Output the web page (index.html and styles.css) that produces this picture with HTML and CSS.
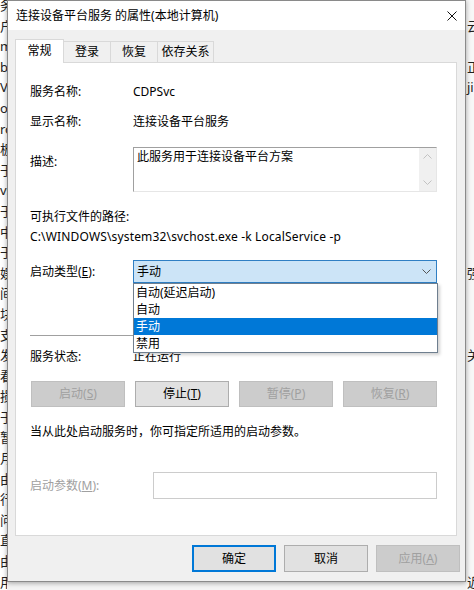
FILE: index.html
```html
<!DOCTYPE html>
<html lang="zh-CN">
<head>
<meta charset="utf-8">
<title>连接设备平台服务 的属性(本地计算机)</title>
<link rel="stylesheet" href="styles.css">
</head>
<body>
<div class="screen">
  <div class="bg-left">
    <div class="strip-text">务<br>户<br>m<br>b<br>Vi<br>ox<br>ro<br>板<br>于<br>vs<br>于<br>中<br>于<br>娱<br>间<br>块<br>支<br>发<br>看<br>损<br>于<br>暂<br>月<br>由<br>行<br>问<br>直<br>由<br>用</div>
  </div>

  <div class="dialog">
    <div class="titlebar">
      <span class="title">连接设备平台服务 的属性(本地计算机)</span>
      <svg class="close" width="10" height="10" viewBox="0 0 10 10" aria-label="关闭">
        <path d="M0.5 0.5 L9.5 9.5 M9.5 0.5 L0.5 9.5" stroke="#111" stroke-width="1" fill="none"/>
      </svg>
    </div>

    <div class="body">
      <div class="tabs">
        <div class="tab active">常规</div>
        <div class="tab w47">登录</div>
        <div class="tab w47">恢复</div>
        <div class="tab w56">依存关系</div>
        <div class="tab-fill"></div>
      </div>

      <div class="panel">
        <div class="row">
          <span class="label">服务名称:</span>
          <span class="value">CDPSvc</span>
        </div>
        <div class="row row-display">
          <span class="label">显示名称:</span>
          <span class="value">连接设备平台服务</span>
        </div>
        <div class="row row-desc">
          <span class="label label-desc">描述:</span>
          <div class="textbox">
            <div class="textbox-text">此服务用于连接设备平台方案</div>
            <div class="scrollbar">
              <svg width="17" height="17" viewBox="0 0 17 17"><path d="M4.5 10.5 L8.5 6.5 L12.5 10.5" stroke="#c2c2c2" stroke-width="1" fill="none"/></svg>
              <svg width="17" height="17" viewBox="0 0 17 17"><path d="M4.5 6.5 L8.5 10.5 L12.5 6.5" stroke="#c2c2c2" stroke-width="1" fill="none"/></svg>
            </div>
          </div>
        </div>
        <div class="row row-pathlabel">可执行文件的路径:</div>
        <div class="row row-path">C:\WINDOWS\system32\svchost.exe -k LocalService -p</div>
        <div class="row row-startup">
          <span class="label">启动类型(<u>E</u>):</span>
          <div class="combo-wrap">
            <div class="combo">
              <span>手动</span>
              <svg width="9" height="6" viewBox="0 0 9 6"><path d="M0.5 0.5 L4.5 4.5 L8.5 0.5" stroke="#555" stroke-width="1" fill="none"/></svg>
            </div>
            <div class="dropdown">
              <div class="opt">自动(延迟启动)</div>
              <div class="opt">自动</div>
              <div class="opt sel">手动</div>
              <div class="opt">禁用</div>
            </div>
          </div>
        </div>
        <div class="sep"></div>
        <div class="row row-status">
          <span class="label">服务状态:</span>
          <span class="value">正在运行</span>
        </div>
        <div class="btn-row">
          <div class="btn disabled">启动(<u>S</u>)</div>
          <div class="btn">停止(<u>T</u>)</div>
          <div class="btn disabled">暂停(<u>P</u>)</div>
          <div class="btn disabled">恢复(<u>R</u>)</div>
        </div>
        <div class="row row-hint">当从此处启动服务时，你可指定所适用的启动参数。</div>
        <div class="row row-params">
          <span class="label label-params">启动参数(<u>M</u>):</span>
          <div class="input"></div>
        </div>
      </div>

      <div class="footer">
        <div class="btn fbtn default">确定</div>
        <div class="btn fbtn">取消</div>
        <div class="btn fbtn disabled">应用(<u>A</u>)</div>
      </div>
    </div>
  </div>

  <div class="bg-right">
    <div class="strip-text right-text"><br>云<br><br>正<br>ji<br><br><br><br><br><br><br><br><br>强<br><br><br><br>关<br><br><br><br><br><br><br><br><br><br><br>近</div>
  </div>
  <div class="bg-bottom"></div>
</div>
</body>
</html>
```

FILE: styles.css
```css
* {
  box-sizing: border-box;
}

html,
body {
  margin: 0;
  padding: 0;
}

body {
  width: 474px;
  height: 590px;
  overflow: hidden;
  background: #ffffff;
  font-family: "Noto Sans", "Noto Sans CJK SC", sans-serif;
  font-size: 12px;
  color: #000000;
}

u {
  text-decoration: underline;
  text-underline-offset: 1px;
}

.screen {
  display: grid;
  grid-template-columns: 7px 459px 8px;
  grid-template-rows: 582px 8px;
  width: 474px;
  height: 590px;
}

/* background window fragments */
.bg-left {
  grid-column: 1;
  grid-row: 1 / 3;
  overflow: hidden;
  background: #ffffff;
}

.strip-text {
  margin-top: -5px;
  font-size: 13px;
  line-height: 20.6px;
  color: #222222;
  white-space: nowrap;
}

.bg-right {
  grid-column: 3;
  grid-row: 1 / 3;
  overflow: hidden;
  background: #f7f7f7;
}

.right-text {
  margin-left: 1px;
}

.bg-bottom {
  grid-column: 2;
  grid-row: 2;
  background: #f4f4f4;
}

/* dialog */
.dialog {
  grid-column: 2;
  grid-row: 1;
  border: 1px solid #8a8a8a;
  background: #f0f0f0;
  display: flex;
  flex-direction: column;
  box-shadow: 0 1px 5px rgba(0, 0, 0, 0.35);
  position: relative;
  z-index: 1;
}

.titlebar {
  height: 29px;
  flex: none;
  background: #ffffff;
  display: flex;
  align-items: center;
  justify-content: space-between;
  padding: 0 8px;
}

.title {
  line-height: 16px;
  margin-top: 1px;
}

.close {
  display: block;
}

.body {
  flex: 1;
  padding: 9px 8px 0 7px;
}

/* tabs */
.tabs {
  display: flex;
  align-items: flex-end;
  height: 24px;
}

.tab {
  height: 22px;
  border: 1px solid #d9d9d9;
  border-left: none;
  background: #f0f0f0;
  display: flex;
  align-items: center;
  justify-content: center;
  line-height: 16px;
  flex: none;
}

.tab.active {
  width: 49px;
  height: 24px;
  border-left: 1px solid #d9d9d9;
  border-bottom: none;
  background: #ffffff;
  padding-bottom: 1px;
}

.w47 {
  width: 47px;
}

.w56 {
  width: 56px;
}

.tab-fill {
  flex: 1;
  height: 1px;
  border-bottom: 1px solid #d9d9d9;
}

/* panel */
.panel {
  height: 473px;
  background: #ffffff;
  border: 1px solid #d9d9d9;
  border-top: none;
  padding: 19px 19px 0 14px;
}

.row {
  display: flex;
  align-items: center;
  line-height: 20px;
  min-height: 20px;
}

.label {
  width: 103px;
  flex: none;
}

.row-display {
  margin-top: 10px;
}

.row-desc {
  margin-top: 15px;
  align-items: flex-start;
}

.label-desc {
  padding-top: 5px;
}

.textbox {
  width: 304px;
  height: 45px;
  border: 1px solid;
  border-color: #a0a0a0 #e6e6e6 #e6e6e6 #a0a0a0;
  display: flex;
  background: #ffffff;
}

.textbox-text {
  flex: 1;
  padding: 1px 3px 0;
  line-height: 16px;
}

.scrollbar {
  width: 17px;
  flex: none;
  background: #f0f0f0;
  display: flex;
  flex-direction: column;
  justify-content: space-between;
}

.scrollbar svg {
  display: block;
}

.row-pathlabel {
  margin-top: 15px;
}

.row-path {
  letter-spacing: 0.16px;
}

.row-startup {
  margin-top: 13px;
}

.combo-wrap {
  position: relative;
  width: 304px;
}

.combo {
  height: 23px;
  border: 1px solid #2f7fc4;
  background: #cce4f7;
  display: flex;
  align-items: center;
  justify-content: space-between;
  padding: 0 5px 0 3px;
  line-height: 16px;
}

.combo svg {
  display: block;
}

.dropdown {
  position: absolute;
  top: 100%;
  left: 0;
  width: 305px;
  border: 1px solid #6f7f8f;
  background: #ffffff;
  z-index: 2;
  box-shadow: 2px 2px 3px rgba(0, 0, 0, 0.18);
}

.opt {
  height: 17px;
  line-height: 17px;
  padding-left: 2px;
}

.opt.sel {
  background: #0078d7;
  color: #ffffff;
}

.sep {
  margin-top: 52px;
  height: 1px;
  width: 407px;
  background: #a0a0a0;
}

.row-status {
  margin-top: 11px;
}

.btn-row {
  margin-top: 14px;
  display: flex;
  justify-content: space-between;
  padding-left: 1px;
}

.btn {
  height: 26px;
  width: 94px;
  border: 1px solid #adadad;
  background: #e1e1e1;
  display: flex;
  align-items: center;
  justify-content: center;
  line-height: 16px;
  flex: none;
}

.btn.disabled {
  background: #cccccc;
  border-color: #bfbfbf;
  color: #a0a0a0;
}

.row-hint {
  margin-top: 15px;
}

.row-params {
  margin-top: 30px;
}

.label-params {
  width: 123px;
  color: #a0a0a0;
}

.input {
  width: 284px;
  height: 27px;
  border: 1px solid #cccccc;
  background: #ffffff;
}

/* footer buttons */
.footer {
  display: flex;
  justify-content: flex-end;
  gap: 8px;
  margin-top: 9px;
  margin-right: -3px;
}

.fbtn {
  width: 84px;
  height: 27px;
}

.fbtn.default {
  border: 2px solid #0078d7;
}
```
